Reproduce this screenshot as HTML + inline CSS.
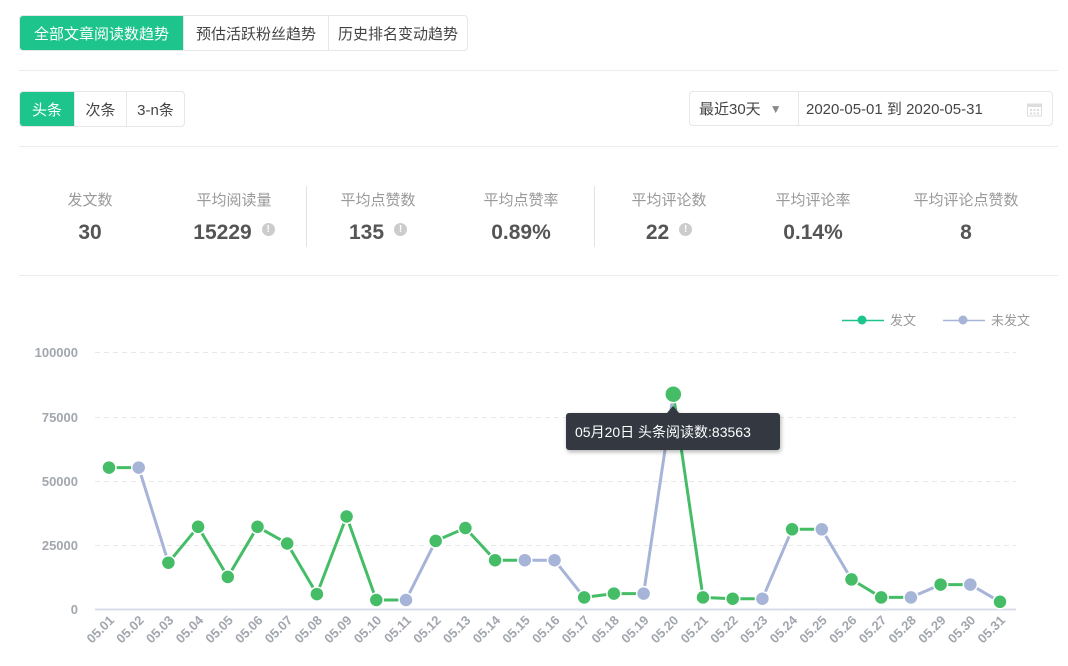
<!DOCTYPE html>
<html><head><meta charset="utf-8"><style>
*{margin:0;padding:0;box-sizing:border-box}
body{width:1068px;height:666px;background:#fff;font-family:"Liberation Sans","Noto Sans CJK SC",sans-serif;position:relative;overflow:hidden;color:#333}
.abs{position:absolute}
.tabs{position:absolute;display:flex;border:1px solid #e6e6e6;border-radius:4px;overflow:hidden;font-size:15px}
.tabs div{display:flex;align-items:center;justify-content:center;border-left:1px solid #e6e6e6;color:#444}
.tabs div:first-child{border-left:none}
.tabs .on{background:#1dc48c;color:#fff}
.hr{position:absolute;left:19px;width:1039px;height:1px;background:#ececec}
.st{position:absolute;width:140px;text-align:center}
.st .l{font-size:15px;color:#999;position:absolute;top:0;width:100%}
.st .v{font-size:21px;font-weight:bold;color:#555;position:absolute;top:32px;width:100%}
.ic{display:inline-block;width:13px;height:13px;border-radius:50%;background:#ccc;color:#fff;font-size:10px;line-height:13px;text-align:center;vertical-align:top;margin-left:10px;margin-top:2px}
.dv{position:absolute;width:1px;top:186px;height:61px;background:#e2e2e2}
</style></head><body>
<div class="tabs" style="left:19px;top:15px;height:36px">
<div class="on" style="width:163px">全部文章阅读数趋势</div>
<div style="width:145px">预估活跃粉丝趋势</div>
<div style="width:139px">历史排名变动趋势</div>
</div>
<div class="hr" style="top:70px"></div>
<div class="tabs" style="left:19px;top:91px;height:36px">
<div class="on" style="width:54px">头条</div>
<div style="width:52px">次条</div>
<div style="width:58px">3-n条</div>
</div>
<div class="tabs" style="left:689px;top:91px;height:35px;width:364px">
<div style="width:108px;justify-content:flex-start;padding-left:9px">最近30天<span style="color:#888;font-size:12px;margin-left:9px">▼</span></div>
<div style="flex:1;justify-content:flex-start;padding-left:7px">2020-05-01 到 2020-05-31
<svg class="abs" style="right:10px;top:10px" width="15" height="15" viewBox="0 0 15 15"><rect x="0.5" y="2" width="14" height="12" fill="none" stroke="#ddd"/><rect x="0.5" y="2" width="14" height="3" fill="#ddd"/><g fill="#ddd"><rect x="3" y="7" width="2" height="2"/><rect x="6.5" y="7" width="2" height="2"/><rect x="10" y="7" width="2" height="2"/><rect x="3" y="10.5" width="2" height="2"/><rect x="6.5" y="10.5" width="2" height="2"/><rect x="10" y="10.5" width="2" height="2"/></g></svg></div>
</div>
<div class="hr" style="top:146px"></div>
<div class="st" style="left:20px;top:189px"><div class="l">发文数</div><div class="v">30</div></div>
<div class="st" style="left:164px;top:189px"><div class="l">平均阅读量</div><div class="v">15229<span class="ic">!</span></div></div>
<div class="dv" style="left:306px"></div>
<div class="st" style="left:308px;top:189px"><div class="l">平均点赞数</div><div class="v">135<span class="ic">!</span></div></div>
<div class="st" style="left:451px;top:189px"><div class="l">平均点赞率</div><div class="v">0.89%</div></div>
<div class="dv" style="left:594px"></div>
<div class="st" style="left:599px;top:189px"><div class="l">平均评论数</div><div class="v">22<span class="ic">!</span></div></div>
<div class="st" style="left:743px;top:189px"><div class="l">平均评论率</div><div class="v">0.14%</div></div>
<div class="st" style="left:896px;top:189px"><div class="l">平均评论点赞数</div><div class="v">8</div></div>
<div class="hr" style="top:275px"></div>

<svg class="abs" style="left:0;top:0" width="1068" height="666">
<g stroke="#e8e8e8" stroke-dasharray="5,4" stroke-width="1">
<line x1="95" y1="352.5" x2="1016" y2="352.5"/><line x1="95" y1="417.5" x2="1016" y2="417.5"/><line x1="95" y1="481.5" x2="1016" y2="481.5"/><line x1="95" y1="545.5" x2="1016" y2="545.5"/>
</g>
<line x1="95" y1="609.5" x2="1016" y2="609.5" stroke="#d9dcea" stroke-width="2"/>
<g font-size="13" font-weight="bold" fill="#a2a6ae" text-anchor="end" font-family="Liberation Sans,sans-serif">
<text x="78" y="357">100000</text><text x="78" y="422">75000</text><text x="78" y="486">50000</text><text x="78" y="550">25000</text><text x="78" y="614">0</text>
</g>
<g stroke-width="3" fill="none">
<g stroke="#45bd67">
<line x1="109" y1="467.6" x2="138.7" y2="467.6"/>
<polyline points="168.4,562.7 198.1,526.8 227.8,576.9 257.5,526.8 287.2,543.5 316.9,594.1 346.6,516.5 376.3,600 406,600"/>
<polyline points="435.7,540.9 465.4,528 495.1,560.2 524.8,560.2"/>
<polyline points="584.2,597.4 613.9,593.6 643.6,593.6"/>
<polyline points="673.3,394.2 703,597.4 732.7,598.7 762.4,598.7"/>
<line x1="792.1" y1="529.3" x2="821.8" y2="529.3"/>
<polyline points="851.5,579.4 881.2,597.4 910.9,597.4"/>
<line x1="940.6" y1="584.6" x2="970.3" y2="584.6"/>
</g>
<g stroke="#a6b4d8">
<line x1="138.7" y1="467.6" x2="168.4" y2="562.7"/>
<line x1="406" y1="600" x2="435.7" y2="540.9"/>
<polyline points="524.8,560.2 554.5,560.2 584.2,597.4"/>
<line x1="643.6" y1="593.6" x2="673.3" y2="394.2"/>
<line x1="762.4" y1="598.7" x2="792.1" y2="529.3"/>
<line x1="821.8" y1="529.3" x2="851.5" y2="579.4"/>
<line x1="910.9" y1="597.4" x2="940.6" y2="584.6"/>
<line x1="970.3" y1="584.6" x2="1000" y2="601.8"/>
</g>
</g>
<g stroke="#fff" stroke-width="1.5">
<g fill="#45bd67">
<circle cx="109" cy="467.6" r="7"/><circle cx="168.4" cy="562.7" r="7"/><circle cx="198.1" cy="526.8" r="7"/><circle cx="227.8" cy="576.9" r="7"/><circle cx="257.5" cy="526.8" r="7"/><circle cx="287.2" cy="543.5" r="7"/><circle cx="316.9" cy="594.1" r="7"/><circle cx="346.6" cy="516.5" r="7"/><circle cx="376.3" cy="600" r="7"/><circle cx="435.7" cy="540.9" r="7"/><circle cx="465.4" cy="528" r="7"/><circle cx="495.1" cy="560.2" r="7"/><circle cx="584.2" cy="597.4" r="7"/><circle cx="613.9" cy="593.6" r="7"/><circle cx="673.3" cy="394.2" r="8.5"/><circle cx="703" cy="597.4" r="7"/><circle cx="732.7" cy="598.7" r="7"/><circle cx="792.1" cy="529.3" r="7"/><circle cx="851.5" cy="579.4" r="7"/><circle cx="881.2" cy="597.4" r="7"/><circle cx="940.6" cy="584.6" r="7"/><circle cx="1000" cy="601.8" r="7"/>
</g>
<g fill="#a6b4d8">
<circle cx="138.7" cy="467.6" r="7"/><circle cx="406" cy="600" r="7"/><circle cx="524.8" cy="560.2" r="7"/><circle cx="554.5" cy="560.2" r="7"/><circle cx="643.6" cy="593.6" r="7"/><circle cx="762.4" cy="598.7" r="7"/><circle cx="821.8" cy="529.3" r="7"/><circle cx="910.9" cy="597.4" r="7"/><circle cx="970.3" cy="584.6" r="7"/>
</g>
</g>
<g font-size="13" font-weight="bold" fill="#a2a6ae" text-anchor="end" font-family="Liberation Sans,sans-serif">
<text transform="translate(115,621) rotate(-45)">05.01</text><text transform="translate(144.7,621) rotate(-45)">05.02</text><text transform="translate(174.4,621) rotate(-45)">05.03</text><text transform="translate(204.1,621) rotate(-45)">05.04</text><text transform="translate(233.8,621) rotate(-45)">05.05</text><text transform="translate(263.5,621) rotate(-45)">05.06</text><text transform="translate(293.2,621) rotate(-45)">05.07</text><text transform="translate(322.9,621) rotate(-45)">05.08</text><text transform="translate(352.6,621) rotate(-45)">05.09</text><text transform="translate(382.3,621) rotate(-45)">05.10</text><text transform="translate(412,621) rotate(-45)">05.11</text><text transform="translate(441.7,621) rotate(-45)">05.12</text><text transform="translate(471.4,621) rotate(-45)">05.13</text><text transform="translate(501.1,621) rotate(-45)">05.14</text><text transform="translate(530.8,621) rotate(-45)">05.15</text><text transform="translate(560.5,621) rotate(-45)">05.16</text><text transform="translate(590.2,621) rotate(-45)">05.17</text><text transform="translate(619.9,621) rotate(-45)">05.18</text><text transform="translate(649.6,621) rotate(-45)">05.19</text><text transform="translate(679.3,621) rotate(-45)">05.20</text><text transform="translate(709,621) rotate(-45)">05.21</text><text transform="translate(738.7,621) rotate(-45)">05.22</text><text transform="translate(768.4,621) rotate(-45)">05.23</text><text transform="translate(798.1,621) rotate(-45)">05.24</text><text transform="translate(827.8,621) rotate(-45)">05.25</text><text transform="translate(857.5,621) rotate(-45)">05.26</text><text transform="translate(887.2,621) rotate(-45)">05.27</text><text transform="translate(916.9,621) rotate(-45)">05.28</text><text transform="translate(946.6,621) rotate(-45)">05.29</text><text transform="translate(976.3,621) rotate(-45)">05.30</text><text transform="translate(1006,621) rotate(-45)">05.31</text>
</g>
<line x1="842" y1="320.5" x2="884" y2="320.5" stroke="#1dc48c" stroke-width="1.5"/><circle cx="862" cy="320" r="4.5" fill="#1dc48c"/>
<text x="890" y="325" font-size="13" fill="#999">发文</text>
<line x1="943" y1="320.5" x2="985" y2="320.5" stroke="#a6b4d8" stroke-width="1.5"/><circle cx="963" cy="320" r="4.5" fill="#a6b4d8"/>
<text x="991" y="325" font-size="13" fill="#999">未发文</text>
<g filter="drop-shadow(1px 2px 2px rgba(0,0,0,.3))">
<rect x="566" y="413" width="214" height="37" rx="3" fill="#333841"/>
<path d="M667 413 L673 406 L679 413 Z" fill="#333841"/>
</g>
<text x="575" y="437" font-size="14" fill="#fff">05月20日 头条阅读数:83563</text>
</svg>
</body></html>
